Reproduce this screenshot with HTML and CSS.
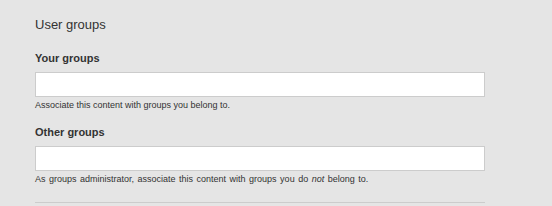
FILE: index.html
```html
<!DOCTYPE html>
<html lang="en">

<head>
  <meta charset="UTF-8">
  <meta name="viewport" content="width=device-width, initial-scale=1.0">
  <title>User groups</title>
  <link rel="stylesheet" href="styles.css">
</head>

<body>
  <div class="panel">
    <h2>User groups</h2>
    <div class="field">
      <label for="your-groups">Your groups</label>
      <input type="text" id="your-groups">
      <p class="help">Associate this content with groups you belong to.</p>
    </div>
    <div class="field">
      <label for="other-groups">Other groups</label>
      <input type="text" id="other-groups">
      <p class="help loose">As groups administrator, associate this content with groups you do <em>not</em> belong to.</p>
    </div>
    <hr>
  </div>
</body>

</html>
```
FILE: styles.css
```css
body,
h2,
p {
  margin: 0;
  padding: 0;
}

body {
  background-color: #e5e5e5;
  font-family: "Liberation Sans", Arial, sans-serif;
  color: #333;
}

.panel {
  width: 450px;
  padding: 17px 35px 0;
}

h2 {
  font-size: 13px;
  font-weight: normal;
  line-height: 16px;
  margin-bottom: 18px;
}

.field {
  margin-bottom: 14px;
}

.field label {
  display: block;
  font-size: 11px;
  font-weight: bold;
  line-height: 14px;
  margin-bottom: 7px;
}

.field input {
  display: block;
  box-sizing: border-box;
  width: 450px;
  height: 25px;
  margin: 0;
  border: 1px solid #ccc;
  background: #fff;
}

.help {
  font-size: 9px;
  line-height: 12px;
  margin-top: 2px;
  color: #333;
}

.help.loose {
  word-spacing: 1px;
}

/* collapses with the field margin above */
hr {
  margin: 17px 0 0;
  border: 0;
  border-top: 1px solid #ccc;
}
```
